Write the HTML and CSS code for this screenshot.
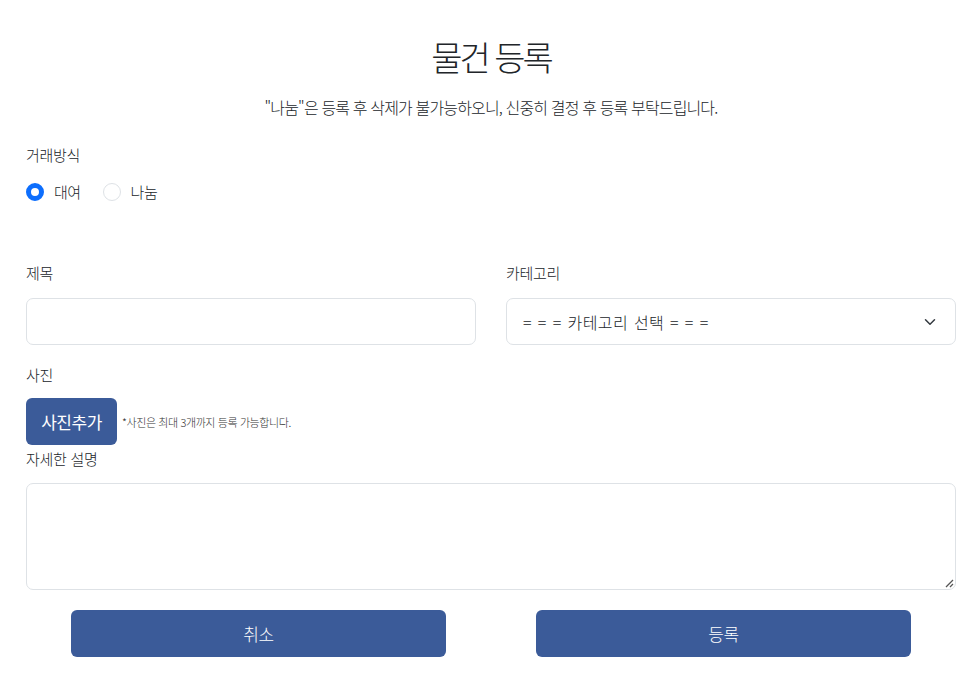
FILE: index.html
```html
<!DOCTYPE html>
<html lang="ko">
<head>
<meta charset="utf-8">
<title>물건 등록</title>
<link rel="stylesheet" href="styles.css">
</head>
<body>
<main class="page">
  <header class="head">
    <h1 class="title">물건 등록</h1>
    <p class="sub">"나눔"은 등록 후 삭제가 불가능하오니, 신중히 결정 후 등록 부탁드립니다.</p>
  </header>

  <section class="group">
    <div class="label">거래방식</div>
    <div class="radios">
      <label class="radio"><span class="dot on"></span>대여</label>
      <label class="radio"><span class="dot"></span>나눔</label>
    </div>
  </section>

  <section class="two">
    <div class="col">
      <div class="label">제목</div>
      <div class="input"></div>
    </div>
    <div class="col">
      <div class="label">카테고리</div>
      <div class="input select">
        <span>= = = 카테고리 선택 = = =</span>
        <svg class="chev" width="16" height="12" viewBox="0 0 16 16"><path d="M2 5l6 6 6-6" fill="none" stroke="#343a40" stroke-width="2" stroke-linecap="round" stroke-linejoin="round"/></svg>
      </div>
    </div>
  </section>

  <section class="photo">
    <div class="label">사진</div>
    <div class="photo-row">
      <button class="btn btn-photo">사진추가</button>
      <span class="note">*사진은 최대 3개까지 등록 가능합니다.</span>
    </div>
  </section>

  <section class="desc">
    <div class="label">자세한 설명</div>
    <div class="textarea">
      <svg class="grip" width="10" height="10" viewBox="0 0 10 10"><path d="M9 2L2 9M9 6L6 9" stroke="#555" stroke-width="1.3" fill="none"/></svg>
    </div>
  </section>

  <section class="actions">
    <div class="cell"><button class="btn btn-wide">취소</button></div>
    <div class="cell"><button class="btn btn-wide">등록</button></div>
  </section>
</main>
</body>
</html>
```

FILE: styles.css
```css
* { box-sizing: border-box; }
html, body { margin: 0; padding: 0; background: #fff; }
body {
  font-family: "Noto Sans CJK KR", "Noto Sans", sans-serif;
  font-weight: 300;
  color: #212529;
}
.page {
  padding: 0 21px 0 26px;
}
.head {
  text-align: center;
  padding-top: 33px;
}
.title {
  margin: 0;
  font-size: 34px;
  font-weight: 300;
  letter-spacing: -3px;
  line-height: 48px;
}
.sub {
  margin: 14px 0 0;
  font-size: 16px;
  letter-spacing: -0.85px;
  line-height: 24px;
}
.label {
  font-size: 15px;
  letter-spacing: -0.3px;
  line-height: 24px;
}
.group { margin-top: 24px; }
.radios {
  display: flex;
  gap: 22px;
  margin-top: 13px;
}
.radio {
  display: flex;
  align-items: center;
  gap: 10px;
  font-size: 15px;
  letter-spacing: -0.5px;
  line-height: 24px;
}
.dot {
  width: 18px;
  height: 18px;
  border-radius: 50%;
  border: 1px solid #dee2e6;
  background: #fff;
}
.dot.on {
  border: 5px solid #0d6efd;
  background: #fff;
}
.two {
  display: grid;
  grid-template-columns: 1fr 1fr;
  gap: 30px;
  margin-top: 57px;
}
.col .label { margin-bottom: 13px; }
.input {
  height: 47px;
  border: 1px solid #dee2e6;
  border-radius: 7px;
  background: #fff;
}
.select {
  display: flex;
  align-items: center;
  justify-content: space-between;
  padding: 0 17px 0 16px;
  font-size: 16px;
  letter-spacing: 0.4px;
  word-spacing: 1px;
}
.chev { display: block; }
.photo { margin-top: 18px; }
.photo-row {
  display: flex;
  align-items: center;
  gap: 5px;
  margin-top: 11px;
}
.btn {
  border: 0;
  background: #3b5b99;
  color: #fff;
  font-family: inherit;
  font-weight: 400;
  border-radius: 6px;
  cursor: pointer;
}
.btn-photo {
  width: 91px;
  height: 47px;
  font-size: 17px;
  letter-spacing: -0.5px;
  padding: 0;
}
.note {
  font-size: 11px;
  letter-spacing: -0.4px;
  color: #333;
}
.desc { margin-top: 2px; }
.desc .label { margin-bottom: 12px; }
.textarea {
  position: relative;
  height: 107px;
  border: 1px solid #dee2e6;
  border-radius: 7px;
}
.grip {
  position: absolute;
  right: 1px;
  bottom: 1px;
}
.actions {
  display: grid;
  grid-template-columns: 1fr 1fr;
  margin-top: 20px;
}
.cell { display: flex; justify-content: center; }
.btn-wide {
  width: 375px;
  height: 47px;
  font-size: 17px;
  font-weight: 300;
  letter-spacing: -0.5px;
}
```
